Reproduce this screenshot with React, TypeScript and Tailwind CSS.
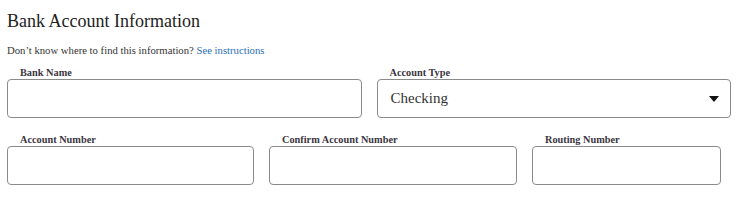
const serif = { fontFamily: '"Liberation Serif", "DejaVu Serif", serif' };

function Field({ label, children }: { label: string; children?: React.ReactNode }) {
  return (
    <div className="flex flex-col">
      <label className="pl-[13px] text-[10.3px] leading-[13px] font-bold text-[#3b3541] mb-0">{label}</label>
      <div className="h-[39px] rounded-[4px] border border-[#8a8a8a] bg-white flex items-center px-[13px]">{children}</div>
    </div>
  );
}

export default function App() {
  return (
    <div className="bg-white w-[746px] h-[211px] pl-[7px] pt-[9px]" style={serif}>
      <h2 className="text-[18px] leading-[24px] text-[#222222]">Bank Account Information</h2>
      <p className="mt-[10px] text-[10.7px] leading-[14px] text-[#333333]">
        Don’t know where to find this information? <a className="text-[#2d6fb6]">See instructions</a>
      </p>
      <div className="mt-[9px] w-[724px] grid grid-cols-2 gap-x-[15px]">
        <Field label="Bank Name" />
        <Field label="Account Type">
          <span className="flex-1 text-[15px] text-[#333333]">Checking</span>
          <svg width="10" height="6" viewBox="0 0 10 6" className="mr-[-2px]">
            <path d="M0 0h10L5 6z" fill="#111111" />
          </svg>
        </Field>
      </div>
      <div className="mt-[15px] grid grid-cols-[247px_248px_189px] gap-x-[15px]">
        <Field label="Account Number" />
        <Field label="Confirm Account Number" />
        <Field label="Routing Number" />
      </div>
    </div>
  );
}
